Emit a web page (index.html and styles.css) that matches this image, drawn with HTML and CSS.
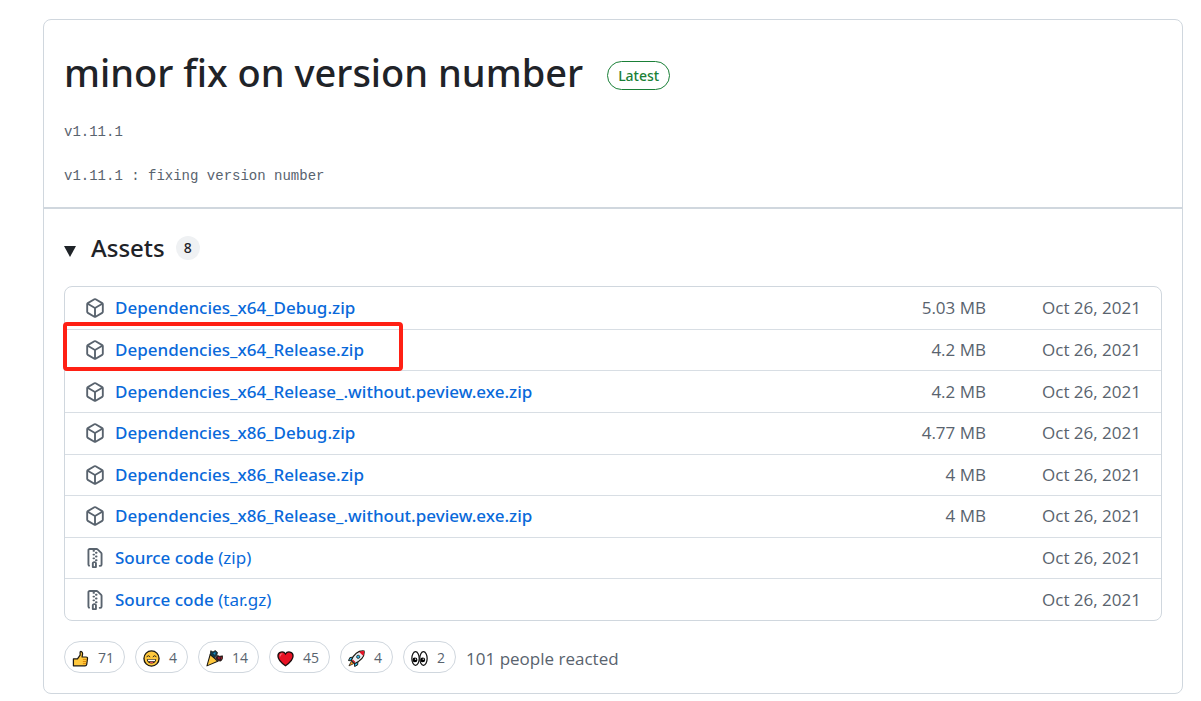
FILE: index.html
```html
<!DOCTYPE html>
<html lang="en">
<head>
	<meta charset="UTF-8">
	<meta name="viewport" content="width=device-width, initial-scale=1">
	<title>minor fix on version number</title>
	<link rel="stylesheet" href="styles.css">
</head>
<body>
	<!-- shared file icons -->
	<svg class="sprite" aria-hidden="true">
		<symbol id="package" viewBox="0 0 16 16">
			<path d="m8.878.392 5.25 3.045c.54.314.872.89.872 1.514v6.098a1.75 1.75 0 0 1-.872 1.514l-5.25 3.045a1.75 1.75 0 0 1-1.756 0l-5.25-3.045A1.75 1.75 0 0 1 1 11.049V4.951c0-.624.332-1.201.872-1.514L7.122.392a1.75 1.75 0 0 1 1.756 0ZM7.875 1.69l-4.63 2.685L8 7.133l4.755-2.758-4.63-2.685a.248.248 0 0 0-.25 0ZM2.5 5.677v5.372c0 .09.047.171.125.216l4.625 2.683V8.432Zm6.25 8.271 4.625-2.683a.25.25 0 0 0 .125-.216V5.677L8.75 8.432Z"/>
		</symbol>
		<symbol id="file-zip" viewBox="0 0 16 16">
			<path fill-rule="evenodd" d="M3.5 1.75v11.5c0 .09.048.173.126.217a.75.75 0 0 1-.752 1.298A1.748 1.748 0 0 1 2 13.25V1.75C2 .784 2.784 0 3.75 0h5.586c.464 0 .909.185 1.237.513l2.914 2.914c.329.328.513.773.513 1.237v8.586A1.75 1.75 0 0 1 12.25 15h-.5a.75.75 0 0 1 0-1.5h.5a.25.25 0 0 0 .25-.25V4.664a.25.25 0 0 0-.073-.177L9.513 1.573a.25.25 0 0 0-.177-.073H7.25a.75.75 0 0 1 0 1.5h-.5a.75.75 0 0 1 0-1.5h-3a.25.25 0 0 0-.25.25Zm3.75 8.75h.5c.966 0 1.75.784 1.75 1.75v3a.75.75 0 0 1-.75.75h-2.5a.75.75 0 0 1-.75-.75v-3c0-.966.784-1.75 1.75-1.75ZM7 12.25v2.25h1v-2.25a.25.25 0 0 0-.25-.25h-.5a.25.25 0 0 0-.25.25ZM6 5.25a.75.75 0 0 1 .75-.75h.5a.75.75 0 0 1 0 1.5h-.5A.75.75 0 0 1 6 5.25Zm.75 2.25h.5a.75.75 0 0 1 0 1.5h-.5a.75.75 0 0 1 0-1.5ZM8 6.75A.75.75 0 0 1 8.75 6h.5a.75.75 0 0 1 0 1.5h-.5A.75.75 0 0 1 8 6.75ZM8.75 3h.5a.75.75 0 0 1 0 1.5h-.5a.75.75 0 0 1 0-1.5Zm0 6h.5a.75.75 0 0 1 0 1.5h-.5a.75.75 0 0 1 0-1.5Z"/>
		</symbol>
	</svg>

	<main class="release">
		<header class="release-head">
			<div class="title-row">
				<h1>minor fix on version number</h1>
				<a class="latest" href="#">Latest</a>
			</div>
			<pre class="note">v1.11.1

v1.11.1 : fixing version number</pre>
		</header>

		<div class="release-foot">
			<details open>
				<summary>
					<svg class="caret" viewBox="0 0 12 11"><path d="M0 0h12L6 11z"/></svg>
					<span class="assets-title">Assets</span>
					<span class="counter">8</span>
				</summary>
				<ul class="assets">
					<li>
						<svg class="icon"><use href="#package"/></svg>
						<a href="#">Dependencies_x64_Debug.zip</a>
						<span class="size">5.03 MB</span>
						<time datetime="2021-10-26">Oct 26, 2021</time>
					</li>
					<li class="marked">
						<svg class="icon"><use href="#package"/></svg>
						<a href="#">Dependencies_x64_Release.zip</a>
						<span class="size">4.2 MB</span>
						<time datetime="2021-10-26">Oct 26, 2021</time>
					</li>
					<li>
						<svg class="icon"><use href="#package"/></svg>
						<a href="#">Dependencies_x64_Release_.without.peview.exe.zip</a>
						<span class="size">4.2 MB</span>
						<time datetime="2021-10-26">Oct 26, 2021</time>
					</li>
					<li>
						<svg class="icon"><use href="#package"/></svg>
						<a href="#">Dependencies_x86_Debug.zip</a>
						<span class="size">4.77 MB</span>
						<time datetime="2021-10-26">Oct 26, 2021</time>
					</li>
					<li>
						<svg class="icon"><use href="#package"/></svg>
						<a href="#">Dependencies_x86_Release.zip</a>
						<span class="size">4 MB</span>
						<time datetime="2021-10-26">Oct 26, 2021</time>
					</li>
					<li>
						<svg class="icon"><use href="#package"/></svg>
						<a href="#">Dependencies_x86_Release_.without.peview.exe.zip</a>
						<span class="size">4 MB</span>
						<time datetime="2021-10-26">Oct 26, 2021</time>
					</li>
					<li>
						<svg class="icon"><use href="#file-zip"/></svg>
						<a href="#">Source code <span class="ext">(zip)</span></a>
						<time datetime="2021-10-26">Oct 26, 2021</time>
					</li>
					<li>
						<svg class="icon"><use href="#file-zip"/></svg>
						<a href="#">Source code <span class="ext">(tar.gz)</span></a>
						<time datetime="2021-10-26">Oct 26, 2021</time>
					</li>
				</ul>
			</details>

			<div class="reactions">
				<button type="button" aria-label="71 thumbs up">
					<svg class="emoji" viewBox="0 0 18 18">
						<path d="M1.5 9.5h4.3l2.8-4V2.2c0-1 2.6-1 2.6 1.6 0 1.5-.5 2.7-.5 3.6h4.2c1.1 0 1.7.7 1.5 1.8l-.8 6c-.2 1-.8 1.5-1.8 1.5H1.5z" fill="#ffc83d" stroke="#1c1810" stroke-width="1.3" stroke-linejoin="round"/>
						<path d="M11.5 10h4M11.5 12.2h3.8M11.5 14.4h3.4" fill="none" stroke="#d67d00" stroke-width=".9"/>
					</svg>
					<span>71</span>
				</button>
				<button type="button" aria-label="4 laugh">
					<svg class="emoji" viewBox="0 0 18 18">
						<circle cx="9" cy="9" r="8" fill="#ffc83d" stroke="#1c1810" stroke-width="1.4"/>
						<path d="M4 7.6c.6-2 2.8-2 3.4 0M10.6 7.6c.6-2 2.8-2 3.4 0" fill="none" stroke="#1c1810" stroke-width="1"/>
						<path d="M4 9.7h10c-.2 6-9.8 6-10 0z" fill="#1c1810"/>
						<path d="M5 10.3h8l-.6 1.5H5.6z" fill="#fff"/>
						<path d="M6.8 13.2c1.3-.9 3.1-.9 4.4 0-1.2 1-3.2 1-4.4 0z" fill="#e8505b"/>
					</svg>
					<span>4</span>
				</button>
				<button type="button" aria-label="14 hooray">
					<svg class="emoji" viewBox="0 0 18 18">
						<path d="M4.5 4.5 1 16.8 12.5 12z" fill="#ffc83d" stroke="#1c1810" stroke-width="1.1" stroke-linejoin="round"/>
						<path d="m5 .8 2.4 1.2L9.8.6l2.4 2-1 3.6-2.6 2.3L4.5 5z" fill="#12394a" stroke="#1c1810" stroke-width=".8"/>
						<path d="M7.5 3.5 10.2 2.2 9.6 5.2z" fill="#1b8fc4"/>
						<path d="m10 8.5 2.2-2.7 2.3.9 3-.5v3l-1.7 2.5-3.3-.3z" fill="#3b1620" stroke="#1c1810" stroke-width=".8"/>
						<path d="m12.5 8.3 1.7-.8v2.5zM15.2 8h1.7v1.6z" fill="#e3242b"/>
					</svg>
					<span>14</span>
				</button>
				<button type="button" aria-label="45 heart">
					<svg class="emoji" viewBox="0 0 18 18">
						<path d="M9 16.7C4.5 13.5 1 10.2 1 6.3 1 1.6 7 .7 9 4.2c2-3.5 8-2.6 8 2.1 0 3.9-3.5 7.2-8 10.4z" fill="#e81224" stroke="#1c1010" stroke-width="1.4"/>
						<path d="M3.3 6.3c0-1.5.9-2.2 2-2.3" fill="none" stroke="#f5717c" stroke-width="1.2" stroke-linecap="round"/>
					</svg>
					<span>45</span>
				</button>
				<button type="button" aria-label="4 rocket">
					<svg class="emoji" viewBox="0 0 18 18">
						<path d="M6 7.500 2 8 .5 11.200l4 .2zM10.500 12l-.3 3.800L7 17.500l-.2-4z" fill="#2fb4e9" stroke="#1c1810" stroke-width="1" stroke-linejoin="round"/>
						<path d="M3.500 12 1 16.800 6 14.500z" fill="#ff9a1f" stroke="#1c1810" stroke-width=".8"/>
						<path d="M17 1C11.500.5 6.500 4 3.600 10.800l3.600 3.500C14.500 11 17.800 6 17 1z" fill="#e9eef2" stroke="#1c1810" stroke-width="1.2"/>
						<path d="M17 1c-1.600-.1-3.600.2-5.200 1l4.200 4.200C16.900 4.400 17.200 2.600 17 1z" fill="#e81224"/>
						<circle cx="10.800" cy="7.200" r="1.700" fill="#2fb4e9" stroke="#1c1810" stroke-width=".8"/>
						<path d="m5 10.800 2.300 2.200" stroke="#e81224" stroke-width="1.2"/>
					</svg>
					<span>4</span>
				</button>
				<button type="button" aria-label="2 eyes">
					<svg class="emoji" viewBox="0 0 18 18">
						<g fill="#fff" stroke="#111" stroke-width="1.3">
							<ellipse cx="4.8" cy="9" rx="3.9" ry="7.2"/>
							<ellipse cx="13.2" cy="9" rx="3.9" ry="7.2"/>
						</g>
						<circle cx="4.2" cy="10.5" r="2.6"/>
						<circle cx="12.4" cy="10.5" r="2.6"/>
						<circle cx="4.8" cy="9.7" r=".7" fill="#fff"/>
						<circle cx="13" cy="9.7" r=".7" fill="#fff"/>
					</svg>
					<span>2</span>
				</button>
				<span class="reacted">101 people reacted</span>
			</div>
		</div>
	</main>
</body>
</html>
```
FILE: styles.css
```css
*{
	box-sizing: border-box;
}
body{
	margin: 0;
	padding: 19px 18px 7px 43px;
	background: #fff;
	color: #1f2328;
	font-family: "Segoe UI", "Open Sans", "Noto Sans", sans-serif;
	font-size: 17px;
	line-height: 24px;
}
a{
	color: #0969da;
	text-decoration: none;
}
h1,
.latest,
.assets-title,
.counter,
.assets a{
	font-family: "Segoe UI Semibold", "Noto Sans", sans-serif;
	font-weight: 500;
}
.sprite{
	display: none;
}
.release{
	border: 1px solid #d0d7de;
	border-radius: 8px;
}
.release-head{
	padding: 24px 20px 20px;
	border-bottom: 2px solid #d0d7de;
}
.title-row{
	display: flex;
	align-items: center;
	gap: 24px;
}
h1{
	margin: 0;
	font-size: 38px;
	line-height: 56px;
}
.latest{
	margin-top: 6px;
	padding: 0 10px;
	border: 1px solid #1a7f37;
	border-radius: 15px;
	color: #1a7f37;
	font-size: 14px;
	line-height: 27px;
}
.note{
	margin: 21px 0 0;
	color: #59636e;
	font-family: Consolas, "Liberation Mono", monospace;
	font-size: 14px;
	line-height: 22px;
}
.release-foot{
	padding: 20px;
}
summary{
	display: flex;
	align-items: center;
	list-style: none;
	height: 38px;
	cursor: pointer;
}
.caret{
	width: 12px;
	height: 11px;
	margin-top: 6px;
	fill: #1f2328;
}
.assets-title{
	margin-left: 15px;
	font-size: 24px;
}
.counter{
	min-width: 24px;
	margin-left: 11px;
	padding: 0 8px;
	border-radius: 12px;
	background: #eff1f3;
	font-size: 14px;
	text-align: center;
}
.assets{
	display: grid;
	grid-auto-rows: 1fr;
	min-height: 335px;
	margin: 19px 0 0;
	padding: 0;
	border: 1px solid #d0d7de;
	border-radius: 8px;
	list-style: none;
}
.assets li{
	display: flex;
	align-items: center;
	padding: 0 20px;
	border-top: 1px solid #d8dee4;
	color: #59636e;
}
.assets li:first-child{
	border-top: 0;
}
.assets a{
	flex: 1;
	margin-left: 10px;
}
.ext{
	font-weight: 400;
}
.size{
	text-align: right;
}
time{
	width: 155px;
	text-align: right;
}
.icon{
	width: 20px;
	height: 20px;
	fill: #59636e;
}
/* red frame over the build to download */
.marked{
	position: relative;
}
.marked::after{
	content: "";
	position: absolute;
	top: -8px;
	left: -2px;
	box-sizing: border-box;
	width: 340px;
	height: 49px;
	border: 4px solid #ff2014;
	border-radius: 4px;
	pointer-events: none;
}
.reactions{
	display: flex;
	align-items: center;
	gap: 10px;
	margin-top: 20px;
}
.reactions button{
	display: flex;
	align-items: center;
	gap: 9px;
	height: 32px;
	padding: 0 10px 0 7px;
	border: 1px solid #d0d7de;
	border-radius: 16px;
	background: #fff;
	color: #59636e;
	font-family: inherit;
	font-size: 14px;
}
.emoji{
	width: 17px;
	height: 17px;
	margin-top: 3px;
}
.reacted{
	padding-top: 4px;
	color: #59636e;
}
```
